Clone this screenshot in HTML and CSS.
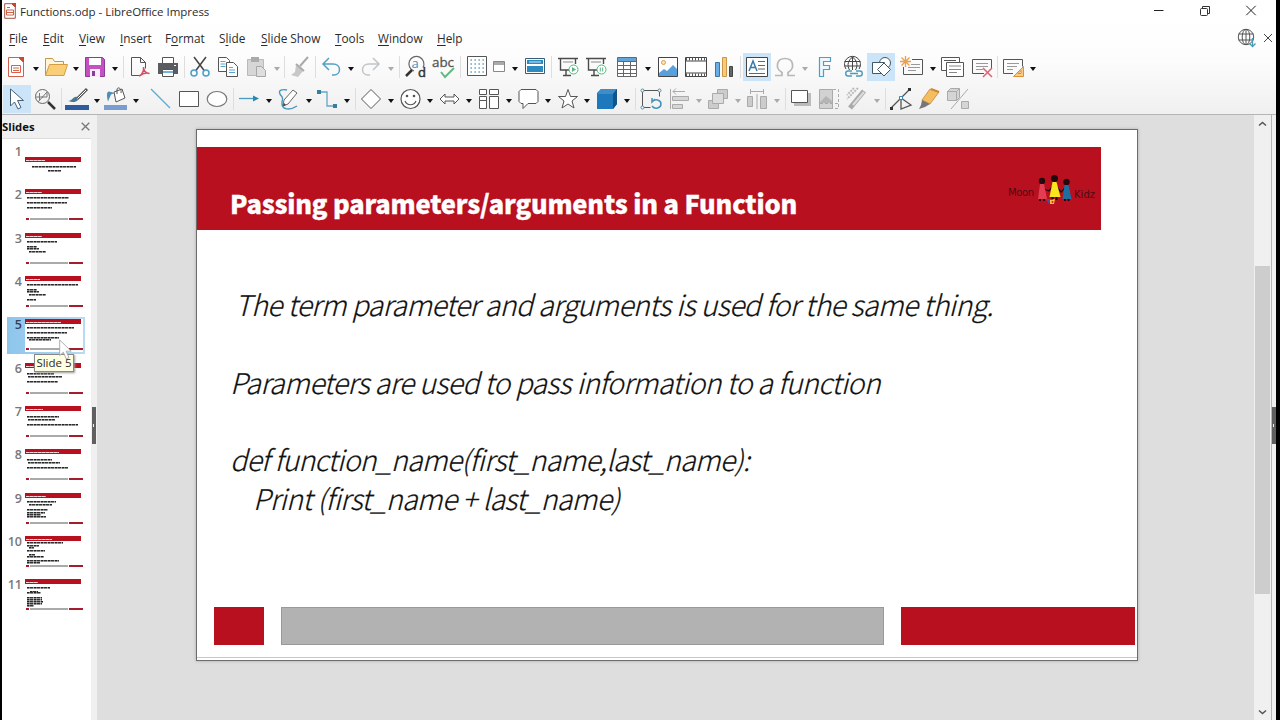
FILE: index.html
```html
<!DOCTYPE html>
<html lang="en">
<head>
  <meta charset="UTF-8">
  <meta name="viewport" content="width=device-width, initial-scale=1.0">
  <title>Functions.odp - LibreOffice Impress</title>
  <link rel="stylesheet" href="styles.css">
</head>
<body>
  <div class="window">
    <header class="titlebar">
      <svg class="app-icon" width="12" height="16" viewBox="0 0 12 16"><path d="M.7.7h7l3.6 3.6v11H.7z" fill="#fff" stroke="#a3563f"/><path d="M7 0h5v5z" fill="#c8452f"/><path d="M2.5 7h7v5h-7zM3 9.5h6M3 4.5h3" fill="none" stroke="#cc6048"/></svg>
      <span class="title">Functions.odp - LibreOffice Impress</span>
      <div class="controls">
        <svg width="12" height="12"><path d="M1 5.5h9.5" stroke="#222"/></svg>
        <svg width="12" height="12" fill="none" stroke="#333"><rect x="1.5" y="3.5" width="7" height="7" rx="1"/><path d="M3.5 3.5v-2h7v7h-2"/></svg>
        <svg width="12" height="12"><path d="M1.3.8l9.4 9.4M10.7.8l-9.4 9.4" stroke="#222"/></svg>
      </div>
    </header>

    <nav class="menubar">
      <span><u>F</u>ile</span>
      <span><u>E</u>dit</span>
      <span><u>V</u>iew</span>
      <span><u>I</u>nsert</span>
      <span>F<u>o</u>rmat</span>
      <span>S<u>l</u>ide</span>
      <span><u>S</u>lide Show</span>
      <span><u>T</u>ools</span>
      <span><u>W</u>indow</span>
      <span><u>H</u>elp</span>
      <div class="doc-controls">
        <svg width="20" height="20" viewBox="0 0 20 20" fill="none" stroke="#555"><circle cx="9" cy="9" r="7.7"/><ellipse cx="9" cy="9" rx="3.8" ry="7.7"/><path d="M9 1v16M1.5 6h15M1.5 12h15"/><path d="M15.500 10v8M12.500 15.500l3 3 3-3" stroke="#4b9cb8" stroke-width="1.300"/></svg>
        <svg width="10" height="10"><path d="M1 1l8 8M9 1L1 9" stroke="#444"/></svg>
      </div>
    </nav>

    <div class="toolbar standard">
      <!-- file -->
      <svg class="tool" viewBox="0 0 28 28" fill="none"><path d="M6.500 4.500h10l5 5v14h-15z" stroke="#d0604d" fill="#fff"/><path d="M16 4h6v6z" fill="#cf4630"/><path d="M9.500 12.500h9v7h-9zM11 15h6M11 17.500h6" stroke="#d9604b"/></svg>
      <i class="caret"></i>
      <svg class="tool" viewBox="0 0 28 28"><path d="M3.500 22.500v-17h7l2 3h9v4" fill="#fff5db" stroke="#c59447"/><path d="M3.500 22.500l4-11h18l-3.500 11z" fill="#f9ce76" stroke="#d49d43"/></svg>
      <i class="caret"></i>
      <svg class="tool" viewBox="0 0 28 28"><path d="M3.500 4.500h17l2 2v17h-19z" fill="#c451c1" stroke="#8c3b99"/><path d="M7 5h12v7H7z" fill="#fff"/><path d="M8 16h10v8H8z" fill="#f8edf8"/><path d="M10 18h3v5h-3z" fill="#8c3b99"/></svg>
      <i class="caret"></i>
      <i class="sep"></i>
      <svg class="tool" viewBox="0 0 28 28" fill="none"><path d="M15 22.500H5.500v-18h9l5 5v6M14.500 4.500v5h5" stroke="#555"/><path d="M13 23c3-1 5-5 4.500-9 0 4 2 6 6 6.500-3-1-7 0-10 2.500" stroke="#cf5364" stroke-width="1.500"/></svg>
      <svg class="tool" viewBox="0 0 28 28"><path d="M8.500 10V4.500h11V10" fill="#fff" stroke="#555"/><path d="M4 10h20v11H4z" fill="#595d62"/><path d="M8.500 16.500h11v7h-11z" fill="#fff" stroke="#555"/><path d="M9 18h10v2H9z" fill="#74b4d8"/><path d="M20 12h2v1h-2z" fill="#fff"/></svg>
      <i class="sep"></i>
      <svg class="tool" viewBox="0 0 28 28" fill="none"><path d="M8 4l10.500 14M20 4L9.500 18" stroke="#444" stroke-width="1.500"/><circle cx="8" cy="20" r="3" stroke="#4c9fc6" stroke-width="1.500"/><circle cx="20" cy="20" r="3" stroke="#4c9fc6" stroke-width="1.500"/></svg>
      <svg class="tool" viewBox="0 0 28 28" fill="#fff" stroke="#555"><path d="M4.500 4.500h8l3 3v11h-11z"/><path d="M6.500 8.500h5M6.500 11h5M6.500 13.500h5" stroke="#58a5d0"/><path d="M12.500 9.500h7l4 4v10h-11z"/><path d="M15 14.500h4M15 17h6M15 19.500h6" stroke="#58a5d0"/></svg>
      <svg class="tool" viewBox="0 0 28 28"><path d="M5.500 6.500h16v16h-16z" fill="#d6d6d6" stroke="#bababa"/><path d="M9 4h8v5H9z" fill="#aaa"/><path d="M14.500 13.500h5l4 4v6h-9z" fill="#dedede" stroke="#a7a7a7"/></svg>
      <i class="caret off"></i>
      <i class="sep"></i>
      <svg class="tool" viewBox="0 0 28 28"><path d="M22 4l-8 9" stroke="#aaa" stroke-width="2"/><path d="M10 12l7 6-5 6-7-2 4-3z" fill="#c8c8c8"/><path d="M10 11l8 7" stroke="#aaa" stroke-width="2"/></svg>
      <i class="sep"></i>
      <svg class="tool" viewBox="0 0 28 28" fill="none" stroke="#55a0c4" stroke-width="1.500"><path d="M12 5L6 11l6 6M6 11h10c9 0 8 11 1 11h-2"/></svg>
      <i class="caret"></i>
      <svg class="tool" viewBox="0 0 28 28" fill="none" stroke="#c1c5c7" stroke-width="1.500"><path d="M16 5l6 6-6 6M22 11H12c-9 0-8 11-1 11h2"/></svg>
      <i class="caret off"></i>
      <i class="sep"></i>
      <svg class="tool" viewBox="0 0 28 28" fill="none"><path d="M21 14.500A7.500 7.500 0 1 0 12 18" stroke="#666" stroke-width="1.200"/><path d="M10 17l-6 6" stroke="#333" stroke-width="2.500"/><text x="9.500" y="15" font-size="13" fill="#3b92bd">a</text><text x="16" y="23.500" font-size="13" fill="#333" stroke="#333" stroke-width=".5">d</text></svg>
      <svg class="tool" viewBox="0 0 28 28"><text x="2" y="14" font-size="13.500" textLength="22" lengthAdjust="spacingAndGlyphs" fill="#555" stroke="#555" stroke-width=".3">abc</text><path d="M11 19l4 5 9-9" fill="none" stroke="#5fb982" stroke-width="2"/></svg>
      <i class="sep"></i>
      <svg class="tool" viewBox="0 0 28 28"><path d="M4.500 3.500h19v19h-19z" fill="#fff" stroke="#555"/><path d="M7.500 7h14M7.500 11h14M7.500 15h14M7.500 19h14" stroke="#4b92b8" stroke-width="1.300" stroke-dasharray="1.300 2.700"/></svg>
      <svg class="tool small" viewBox="0 0 28 28"><path d="M8.500 8.500h11v10h-11z" fill="#fff" stroke="#888"/><path d="M9 9h10v3H9z" fill="#aaa"/></svg>
      <i class="caret"></i>
      <svg class="tool" viewBox="0 0 28 28"><path d="M4.500 5.500h19v15h-19z" fill="#fff" stroke="#355e7b"/><path d="M6 7h16v4H6zM6 13h16v6H6z" fill="#2b8bc0"/><path d="M8 9h12" stroke="#cde6f5"/></svg>
      <i class="sep"></i>
      <svg class="tool" viewBox="0 0 28 28" fill="none" stroke="#4b4b4b"><path d="M4 5.500h20M6.500 6v11h9M21.500 6v5M12 17v5M9 22.500h8" stroke-width="1.400"/><path d="M9 9h10" stroke="#888"/><circle cx="19.500" cy="16.500" r="4.500" fill="#fff" stroke="#57b67f"/><path d="M18 14l4 2.500-4 2.500z" fill="#57b67f" stroke="none"/></svg>
      <svg class="tool" viewBox="0 0 28 28" fill="none" stroke="#4b4b4b"><path d="M4 5.500h20M6.500 6v11h9M21.500 6v5M12 17v5M9 22.500h8" stroke-width="1.400"/><path d="M9 9h10" stroke="#888"/><circle cx="19.500" cy="16.500" r="4.500" fill="#fff" stroke="#57b67f"/><path d="M18.300 14.500v4M20.700 14.500v4" stroke="#57b67f"/></svg>
      <i class="gap"></i>
      <svg class="tool" viewBox="0 0 28 28"><path d="M4.500 4.500h19v19h-19z" fill="#fff"/><path d="M5 4h18v4H5z" fill="#62a5db"/><path d="M4.500 4.500h19v19h-19zM4.500 8.500h19M4.500 12.500h19M4.500 16.500h19M4.500 20.500h19M10.500 8v15M17.500 8v15" fill="none" stroke="#666"/></svg>
      <i class="caret"></i>
      <svg class="tool" viewBox="0 0 28 28"><path d="M4.500 4.500h19v19h-19z" fill="#fff" stroke="#444"/><path d="M5 20l5-4 3 2 6-6 4 4v7H5z" fill="#58a0dc"/><circle cx="9.500" cy="9.500" r="2" fill="#ffe3b2" stroke="#dc9e45"/></svg>
      <svg class="tool" viewBox="0 0 28 28"><path d="M3.500 4.500h21v19h-21z" fill="#fff" stroke="#444"/><path d="M3.500 8h21M3.500 20h21" stroke="#444" fill="none"/><path d="M4 6h20M4 22h20" stroke="#555" stroke-width="3" stroke-dasharray="1 2"/></svg>
      <svg class="tool" viewBox="0 0 28 28"><path d="M5.500 9.500h4v14h-4z" fill="#69aee6" stroke="#3877a9"/><path d="M12.500 4.500h4v19h-4z" fill="#f8cc74" stroke="#c89749"/><path d="M19.500 13.500h3v10h-3z" fill="#666" stroke="#444"/></svg>
      <i class="sep"></i>
      <svg class="tool active" viewBox="0 0 28 28"><path d="M3.500 4.500h21v19h-21z" fill="#fff" stroke="#444"/><path d="M6 18l4-10 4 10M7.500 14.500h5" fill="none" stroke="#3579ad" stroke-width="1.500"/><path d="M15 8.500h7M15 12.500h7M15 16h7M6 20.500h16" stroke="#666"/></svg>
      <svg class="tool" viewBox="0 0 28 28"><path d="M4 22.500h7v-3c-7-4-6-14 3-14s10 10 3 14v3h7" fill="none" stroke="#b8b8b8" stroke-width="1.700"/></svg>
      <i class="caret off"></i>
      <svg class="tool" viewBox="0 0 28 28"><path d="M9.500 23.500v-19h11v4h-7v4h6v4h-6v7z" fill="#eef8fd" stroke="#4b9fce" stroke-width="1.200"/></svg>
      <i class="gap"></i>
      <svg class="tool" viewBox="0 0 28 28" fill="none" stroke="#444"><path d="M7 16a8 8 0 1 1 13 0M13.500 4v13M5.500 8.500h16M5.500 13h16M10.500 17c-3-5-1-10 3-13 4 3 6 8 3 13"/><path d="M13 18H9c-3 0-3 5 0 5h4M17 18h4c3 0 3 5 0 5h-4M11 20.500h8" stroke="#4c9abd" stroke-width="1.400"/></svg>
      <svg class="tool active" viewBox="0 0 28 28" fill="#fff" stroke="#445766"><circle cx="18" cy="10" r="5.500"/><path d="M5.500 9.500h12v11h-12z"/><path d="M17 10l6.500 6.500L17 23l-6.500-6.500z"/></svg>
      <i class="gap"></i>
      <svg class="tool" viewBox="0 0 28 28" fill="none"><path d="M14 6.500h10.500v15h-19V14" stroke="#555"/><path d="M13 11.500h9M10 14.500h12M10 17.500h8" stroke="#999"/><path d="M7.500 3v11M2 8.500h11M3.500 4.500l8 8M11.500 4.500l-8 8" stroke="#e9a04d" stroke-width="1.300"/></svg>
      <i class="caret"></i>
      <svg class="tool" viewBox="0 0 28 28" fill="#fff" stroke="#555"><path d="M2.500 4.500h18v13h-18z"/><path d="M5 7.500h12"/><path d="M7.500 9.500h17v14h-17z"/><path d="M10 13h12M10 16.500h12M10 19.500h8" stroke="#888"/></svg>
      <i class="gap"></i>
      <svg class="tool" viewBox="0 0 28 28" fill="none" stroke="#555"><path d="M16 20.500H4.500v-14h19v9"/><path d="M8 10.500h12M8 13.500h12M8 16.500h7" stroke="#999"/><path d="M15 15l9 9M24 15l-9 9" stroke="#db6473" stroke-width="1.500"/></svg>
      <i class="sep"></i>
      <svg class="tool" viewBox="0 0 28 28" fill="none" stroke="#555"><path d="M14 20.500H4.500v-14h19v7"/><path d="M8 10.500h12M8 13.500h10M8 16.500h6" stroke="#999"/><path d="M14.500 23.500h10v-10z" fill="#f8cc83" stroke="#dc8e38"/><path d="M19 20.500h3v-3z" fill="#fff" stroke="#dc8e38"/></svg>
      <i class="caret"></i>
    </div>

    <div class="toolbar drawing">
      <svg class="tool active" viewBox="0 0 28 28"><path d="M7.500 4v17l4-4 3.500 7 3-1.500-3.500-7h6z" fill="#fff" stroke="#456077"/></svg>
      <svg class="tool" viewBox="0 0 28 28" fill="none"><circle cx="11.500" cy="11.500" r="7" stroke="#666"/><path d="M5 12h7M8.500 8v7M7 17l9-10M16 7v5h-5" stroke="#777"/><path d="M17 17l7 7" stroke="#333" stroke-width="2.500"/></svg>
      <i class="sep"></i>
      <svg class="tool" viewBox="0 0 28 28"><path d="M24 4L14 14" stroke="#555" stroke-width="3"/><path d="M23 5l-9 9" stroke="#fff"/><path d="M5 16c5 0 5-5 9-4l1 3c-3 3-6 2-10 1z" fill="#49778e"/><path d="M2 20h24v5H2z" fill="#2e5b9d"/></svg>
      <i class="caret"></i>
      <svg class="tool" viewBox="0 0 28 28"><path d="M12 7l8-3 3 9-9 4z" fill="#fff" stroke="#555"/><path d="M15 9V5c0-4 5-2 4 3" fill="none" stroke="#555"/><path d="M13 8L7 6.500c-3 0-2 6-1 10l3-7z" fill="#4f8eb4"/><path d="M2 20h23v5H2z" fill="#789dce"/></svg>
      <i class="caret"></i>
      <i class="gap"></i>
      <svg class="tool" viewBox="0 0 28 28"><path d="M4 4l19 19" stroke="#62a8ca" stroke-width="1.200"/></svg>
      <svg class="tool" viewBox="0 0 28 28"><path d="M4.500 6.500h19v15h-19z" fill="#fff" stroke="#555"/></svg>
      <svg class="tool" viewBox="0 0 28 28"><ellipse cx="14" cy="14" rx="9.800" ry="7.500" fill="#fff" stroke="#777" stroke-width="1.200"/></svg>
      <i class="sep"></i>
      <svg class="tool" viewBox="0 0 28 28"><path d="M4 13.500h15" stroke="#489cc0" stroke-width="1.300"/><path d="M18 10.500l6 3-6 3z" fill="#2789b3"/></svg>
      <i class="caret"></i>
      <svg class="tool" viewBox="0 0 28 28" fill="none"><path d="M12 5c-5-1-9 0-7 4 1 3 4 2 2 8-1 9 9 8 15 4" stroke="#4c96ba" stroke-width="1.400"/><path d="M18 5l4 3-9 11-5 2 1-6z" fill="#fff" stroke="#666"/><path d="M8 21l1-3 2 2z" fill="#444"/></svg>
      <i class="caret"></i>
      <svg class="tool" viewBox="0 0 28 28"><path d="M5 7h8v14h7" fill="none" stroke="#64a7c5" stroke-width="1.300"/><path d="M3 5h4v4H3zM19 19h4v4h-4z" fill="#347f9d"/></svg>
      <i class="caret"></i>
      <i class="sep"></i>
      <svg class="tool" viewBox="0 0 28 28"><path d="M14 4.500l9.500 9.500-9.500 9.500L4.500 14z" fill="#fff" stroke="#555"/></svg>
      <i class="caret"></i>
      <svg class="tool" viewBox="0 0 28 28"><circle cx="13.500" cy="14" r="9.500" fill="#fff" stroke="#555" stroke-width="1.200"/><path d="M8 16c2 5 9 5 11 0" fill="none" stroke="#555" stroke-width="1.200"/><circle cx="10" cy="11" r="1.300" fill="#555"/><circle cx="17" cy="11" r="1.300" fill="#555"/></svg>
      <i class="caret"></i>
      <svg class="tool" viewBox="0 0 28 28"><path d="M4 14l5-5v3h9V9l5 5-5 5v-3H9v3z" fill="#fff" stroke="#555"/></svg>
      <i class="caret"></i>
      <svg class="tool" viewBox="0 0 28 28" fill="#fff" stroke="#555"><path d="M4.500 4.500h7v5h-7zM14.500 4.500h9v5h-9zM4.500 11.500h7v4h-7zM4.500 15.500h7v8h-7zM14.500 11.500h9v12h-9z"/></svg>
      <i class="caret"></i>
      <svg class="tool" viewBox="0 0 28 28"><path d="M6 4.500h15l2 2v10l-2 2h-8l-5 5v-5H6l-2-2v-10z" fill="#fff" stroke="#555"/></svg>
      <i class="caret"></i>
      <svg class="tool" viewBox="0 0 28 28"><path d="M14 4.500l2.500 7h7l-5.500 4.500 2 7-6-4-6 4 2-7-5.500-4.500h7z" fill="#fff" stroke="#555"/></svg>
      <i class="caret"></i>
      <svg class="tool" viewBox="0 0 28 28"><path d="M8 4h16v15l-4 5H4V8z" fill="#176cad"/><path d="M8 4h16l-4 5H4z" fill="#3f8dc6"/><path d="M4 9h16v15H4z" fill="#1e79bc"/><path d="M20 9l4-5v15l-4 5z" fill="#115487"/></svg>
      <i class="caret"></i>
      <i class="sep"></i>
      <svg class="tool" viewBox="0 0 28 28" fill="none" stroke="#555"><path d="M5.500 5.500h18M5.500 5.500v17M22.500 5.500v6M5.500 22.500h8"/><path d="M18 14l-3 3v-4M15 17c3-4 9-2 9 2s-6 6-9 2" stroke="#4392b7" stroke-width="1.500"/><g fill="#fff" stroke="#4f8aa4"><circle cx="5.500" cy="5.500" r="1.500"/><circle cx="22.500" cy="5.500" r="1.500"/><circle cx="5.500" cy="22.500" r="1.500"/></g></svg>
      <i class="gap"></i>
      <svg class="tool" viewBox="0 0 28 28" fill="#d6d6d6" stroke="#aaa"><path d="M4.500 4v20M7 6.500h12M7 6.500l3-3M7 6.500l3 3M6.500 11.500h16v4h-16zM6.500 19.500h10v4h-10z"/></svg>
      <i class="caret off"></i>
      <svg class="tool" viewBox="0 0 28 28" fill="#ccc" stroke="#aaa"><path d="M13.500 4.500h10v9h-10zM4.500 15.500h10v8h-10z"/><path d="M8.500 8.500h11v10h-11z" fill="#ddd"/></svg>
      <i class="caret off"></i>
      <svg class="tool" viewBox="0 0 28 28" fill="#ccc" stroke="#aaa"><path d="M7.500 4v5M20.500 4v5M8 6.500h12M4.500 11.500h5v10h-5zM17.500 11.500h6v12h-6zM14 9v15"/></svg>
      <i class="caret off"></i>
      <i class="sep"></i>
      <svg class="tool" viewBox="0 0 28 28"><path d="M7 8h17v13H7z" fill="#bbb"/><path d="M4.500 5.500h16v12h-16z" fill="#fff" stroke="#555"/></svg>
      <svg class="tool" viewBox="0 0 28 28"><path d="M4.500 4.500h13v19h-13z" fill="#d2d2d2" stroke="#aaa"/><path d="M18 4.500h5.500v19H9M5 18.500h19" fill="none" stroke="#aaa" stroke-dasharray="3 2"/><path d="M5 17l6-6 6 5v2H5z" fill="#b5b5b5"/></svg>
      <svg class="tool" viewBox="0 0 28 28"><path d="M21 6L7 23" stroke="#aaa" stroke-width="5"/><path d="M21 7L10 20" stroke="#ddd" stroke-width="2"/><path d="M11 3L4 10M15 3L4 14" stroke="#bbb" stroke-width="2" stroke-dasharray="2 1"/></svg>
      <i class="caret off"></i>
      <i class="sep"></i>
      <svg class="tool" viewBox="0 0 28 28" fill="none" stroke="#555"><path d="M4 23L23 4M14 13v11l10-4z" stroke-width="1.300"/><path d="M3 22h3v3H3zM21 3h3v3h-3z" fill="#333" stroke="none"/><path d="M12.500 11.500h3v3h-3z" fill="#fff" stroke="#3787b0"/></svg>
      <svg class="tool" viewBox="0 0 28 28"><path d="M15 4l9 3-9 12-8-4z" fill="#f4bd62" stroke="#d8963f"/><path d="M16 4l8 3" stroke="#c98831" stroke-width="2"/><path d="M7 15l8 4-5 3-6 2 2-4z" fill="#777"/></svg>
      <i class="gap"></i>
      <svg class="tool" viewBox="0 0 28 28" fill="#d5d5d5" stroke="#aaa"><path d="M3.500 6.500l3-3h9v9l-3 3h-9zM3.500 6.500h9v9M12.500 6.500l3-3M24 4L7 24M17.500 16.500h7v7h-7z"/></svg>
    </div>

    <main class="workspace">
      <aside class="panel">
        <div class="panel-head"><span>Slides</span><svg width="9" height="9"><path d="M.7.7l7.600 7.600M8.300.7L.7 8.300" stroke="#777" stroke-width="1.300"/></svg></div>
        <ol class="slides" id="slides"></ol>
      </aside>
      <div class="splitter"><i class="grip"></i></div>

      <section class="canvas">
        <article class="slide">
          <div class="slide-head">
            <h1>Passing parameters/arguments in a Function</h1>
            <svg class="logo" width="92" height="36" viewBox="0 0 92 36">
              <g class="logo-text"><text x="1" y="25" textLength="26">Moon</text><text x="67" y="27" textLength="21">Kidz</text></g>
              <g fill="#21090d"><circle cx="35" cy="10" r="3.200"/><circle cx="47.500" cy="7.500" r="3.500"/><circle cx="59.500" cy="11" r="3.200"/></g>
              <path d="M37 18l5 2 4-5M49 15l5 6 4-4" fill="none" stroke="#21090d" stroke-width="1.300"/>
              <path d="M33 13h4l3 15h-9z" fill="#e23d52"/>
              <path d="M45.500 11h4l4 15h-11z" fill="#f8e71e"/>
              <path d="M57.500 14h4l3 14h-9z" fill="#1c6f9e"/>
              <path d="M33 28v2M37 28v2M45.500 26v3M49.500 26v3M58 28v2M61.500 28v2" stroke="#21090d" stroke-width="2"/>
              <path d="M39 28l3 5 2-5z" fill="#5845a8"/><path d="M43 29l5-1-1 5h-4z" fill="#ffbc38"/><circle cx="45.500" cy="31" r="1" fill="#c22"/>
            </svg>
          </div>
          <div class="slide-body">
            <p class="line-1">The term parameter and arguments is used for the same thing.</p>
            <p class="line-2">Parameters are used to pass information to a function</p>
            <p class="line-3">def function_name(first_name,last_name):</p>
            <p class="line-4">Print (first_name + last_name)</p>
          </div>
          <div class="slide-foot"><i class="red"></i><i class="gray"></i><i class="red"></i></div>
        </article>
      </section>

      <div class="scrollbar">
        <svg width="9" height="6"><path d="M1 4.500l3.500-3 3.500 3" fill="none" stroke="#555" stroke-width="1.500"/></svg>
        <div class="track"><div class="thumb"></div></div>
        <svg width="9" height="6"><path d="M1 1.500l3.500 3 3.500-3" fill="none" stroke="#555" stroke-width="1.500"/></svg>
      </div>
      <div class="sidebar-edge"><i class="grip"></i></div>
    </main>
  </div>

  <div class="tooltip">Slide 5</div>
  <svg class="pointer" width="14" height="21" viewBox="0 0 14 21"><path d="M.7 1v15.500l3.700-3.300 2.800 6.600 2.800-1.200-2.800-6.400h5z" fill="#fff" stroke="#999" stroke-width=".8"/></svg>

  <script>
    // each line is [top, left, width] inside the thumbnail
    const slides = [
      { title: 19, lines: [[25, 7, 44], [29, 23, 13]] },
      { title: 16, lines: [[8, 2, 42], [13, 2, 40], [18, 2, 25]] },
      { title: 16, lines: [[8, 2, 30], [13, 2, 10], [15, 2, 12], [18, 4, 17]] },
      { title: 14, lines: [[8, 2, 51], [13, 2, 10], [15, 2, 12], [18, 4, 17], [23, 2, 9]] },
      { title: 35, lines: [[8, 2, 47], [13, 2, 40], [18, 2, 32], [20, 4, 22]] },
      { title: 30, lines: [[10, 2, 27], [13, 3, 34], [18, 2, 31]] },
      { title: 17, lines: [[10, 2, 32], [13, 3, 27], [18, 2, 51]] },
      { title: 33, lines: [[10, 2, 25], [13, 3, 32], [18, 2, 41]] },
      { title: 20, lines: [[8, 2, 29], [11, 4, 23], [16, 2, 21], [19, 2, 18], [21, 2, 14], [23, 2, 19]] },
      { title: 26, lines: [[6, 2, 36], [9, 2, 12], [11, 4, 5], [14, 2, 18], [18, 4, 6], [20, 2, 17], [24, 2, 32], [26, 2, 13]] },
      { title: 12, lines: [[8, 2, 23], [12, 5, 8], [13, 2, 14], [18, 2, 15], [20, 2, 15], [22, 2, 16], [24, 2, 15], [26, 2, 7]] }
    ];

    document.getElementById('slides').innerHTML = slides.map((slide, i) => {
      const lines = slide.lines.map(l =>
        `<i class="text" style="top:${l[0]}px;left:${l[1]}px;width:${l[2]}px"></i>`).join('');
      const cls = i === 0 ? 'cover' : i === 4 ? 'selected' : '';
      return `<li class="${cls}"><b>${i + 1}</b><div class="preview">
        <div class="bar"><i style="width:${slide.title}px"></i></div>${lines}
        <div class="foot"><i></i><i></i><i></i></div></div></li>`;
    }).join('');
  </script>
</body>
</html>
```
FILE: styles.css
```css
* {
  box-sizing: border-box;
}

body {
  margin: 0;
  height: 720px;
  overflow: hidden;
  background-color: #000;
  font-family: "Open Sans", "Noto Sans", sans-serif;
  font-size: 12px;
  color: #2b2b2b;
}

.window {
  display: flex;
  flex-direction: column;
  width: 1274px;
  height: 720px;
  margin-left: 2px;
  background: linear-gradient(#fff 0, #fdfdfd 55px, #f0f0f0 114px);
}

.titlebar {
  display: flex;
  align-items: center;
  height: 22px;
  padding: 0 19px 0 2px;
}

.title {
  margin: 1px 0 0 4px;
  font-size: 11.5px;
  letter-spacing: -0.03px;
}

.controls {
  display: flex;
  gap: 34px;
  margin-left: auto;
}

.menubar {
  display: grid;
  grid-template-columns: 34px 36px 41px 45px 54px 42px 74px 43px 59px 1fr auto;
  align-items: center;
  height: 31px;
  padding-left: 7px;
  font-size: 11.8px;
  white-space: nowrap;
}

.menubar u {
  text-underline-offset: 2px;
}

.doc-controls {
  display: flex;
  align-items: center;
  gap: 6px;
  margin-right: 3px;
}

/* toolbars */
.toolbar {
  display: grid;
  align-items: center;
  justify-items: center;
  height: 28px;
}

.standard {
  grid-template-columns:
    28px 12px 28px 12px 27px 12px 5px 28px 28px 4px 28px 28px 28px 13px 3px 28px 3px
    28px 12px 28px 12px 5px 28px 28px 5px 28px 17px 13px 28px 5px 28px 28px 3px
    28px 13px 28px 28px 28px 5px 28px 28px 11px 28px 1px 28px 28px 3px
    28px 13px 28px 1px 28px 3px 28px 12px;
}

.drawing {
  grid-template-columns:
    28px 28px 4px 28px 12px 26px 14px 4px 28px 28px 28px 4px 28px 11px 29px 11px
    27px 12px 4px 28px 12px 27px 12px 27px 12px 28px 12px 27px 12px 27px 12px 28px 12px
    4px 28px 1px 28px 10px 28px 11px 28px 12px 4px 28px 28px 28px 12px 4px 28px 28px 1px 28px;
  height: 34px;
  padding: 4px 0 1px 1px;
  border-bottom: 1px solid #b5b5b5;
}

.tool {
  width: 28px;
  height: 28px;
}

.tool.small {
  justify-self: start;
  margin-left: -6px;
}

.tool.active {
  background-color: #cce4f7;
}

.caret {
  border: 3.500px solid transparent;
  border-top: 4px solid #111;
  border-bottom: 0;
  margin-top: 3px;
}

.caret.off {
  border-top-color: #aaa;
}

.sep {
  width: 1px;
  height: 22px;
  background-color: #dedede;
}

/* workspace */
.workspace {
  display: flex;
  flex: 1;
  min-height: 0;
}

.panel {
  display: flex;
  flex-direction: column;
  width: 89px;
}

.panel-head {
  display: flex;
  align-items: center;
  justify-content: space-between;
  height: 24px;
  padding: 0 1px 0 0;
  background-color: #f0f0f0;
  border-bottom: 1px solid #ddd;
  font-size: 11.300px;
  font-weight: bold;
  color: #111;
}

.slides {
  flex: 1;
  margin: 0;
  padding: 5px 6px 0 5px;
  list-style: none;
  background-color: #fff;
}

.slides li {
  display: flex;
  align-items: flex-start;
  height: 37px;
  margin-bottom: 6.330px;
  padding: 2px;
}

.slides b {
  display: flex;
  justify-content: flex-end;
  width: 13px;
  margin: -3px 3px 0 0;
  font-size: 12.500px;
  font-weight: 600;
  line-height: 17px;
  color: #777;
}

.slides .selected {
  background: linear-gradient(90deg, #8cc5ec, #b9dbf2);
}

.selected b {
  color: #345;
}

.preview {
  position: relative;
  width: 58px;
  height: 33px;
  background-color: #fff;
}

.bar {
  width: 56px;
  height: 5px;
  padding: 3px 0 0 1px;
  background-color: #b91020;
}

.cover .bar {
  margin-top: 11px;
}

.bar i {
  display: block;
  height: 1px;
  background: repeating-linear-gradient(90deg, #f6d5d8 0 3px, #e59a9f 3px 4px);
}

.text {
  position: absolute;
  height: 2px;
  background:
    linear-gradient(rgba(255, 255, 255, 0) 50%, rgba(255, 255, 255, 0.45) 50%),
    repeating-linear-gradient(90deg, #222 0 2px, #777 2px 3px, #333 3px 6px, #999 6px 7px);
}

.cover .text {
  margin-top: -5px;
}

.foot {
  position: absolute;
  left: 1px;
  bottom: 2px;
  display: grid;
  grid-template-columns: 3px 38px 14px;
  gap: 1px;
}

.cover .foot {
  display: none;
}

.foot i {
  height: 2px;
  background-color: #a51c2b;
}

.foot i:nth-child(2) {
  background-color: #aaa;
}

.splitter {
  display: flex;
  align-items: center;
  width: 6px;
  background-color: #f0f0f0;
}

.grip {
  width: 4px;
  height: 37px;
  margin: 16px 0 0 1px;
  background: linear-gradient(90deg, transparent 1px, #eee 1px 2px, transparent 2px) center / 4px 3px no-repeat #606060;
}

.canvas {
  flex: 1;
  padding: 14px 0 0 99px;
  background-color: #dedede;
}

.slide {
  display: flex;
  flex-direction: column;
  width: 942px;
  height: 532px;
  padding-top: 17px;
  background: linear-gradient(#c8c8c8, #c8c8c8) 0 527px / 100% 1px no-repeat #fff;
  border: 1px solid #6c6c6c;
  box-shadow: 0 0 3px #aaa;
}

.slide-head {
  display: flex;
  justify-content: space-between;
  width: 904px;
  height: 83px;
  padding: 24px 2px 0 33px;
  background-color: #b91020;
}

h1 {
  margin: 13px 0 0;
  font-family: "Noto Sans CJK SC", sans-serif;
  font-size: 25.500px;
  font-weight: 900;
  line-height: 38px;
  letter-spacing: -0.19px;
  color: #fff;
  -webkit-text-stroke: 0.3px #fff;
  white-space: nowrap;
}

.logo-text {
  font-family: "DejaVu Sans", sans-serif;
  font-size: 10px;
  fill: #4a0d15;
}

.slide-body {
  flex: 1;
  padding: 55px 0 0 33px;
  font-family: "Noto Sans CJK SC", sans-serif;
  font-size: 28.500px;
  font-weight: 300;
  font-style: italic;
  line-height: 38.750px;
  letter-spacing: -0.66px;
  color: #111;
  -webkit-text-stroke: 0.2px #111;
  white-space: nowrap;
}

.slide-body p {
  margin: 0 0 38.750px;
}

.slide-body .line-1 {
  padding-left: 5px;
}

.slide-body .line-3 {
  margin-bottom: 0;
  letter-spacing: -0.74px;
}

.slide-body .line-4 {
  margin-bottom: 0;
  padding-left: 23px;
}

.slide-foot {
  display: grid;
  grid-template-columns: 50px 603px 234px;
  gap: 17px;
  height: 53px;
  padding-left: 17px;
}

.slide-foot i {
  height: 38px;
}

.red {
  background-color: #b91020;
}

.gray {
  background-color: #b2b2b2;
  border: 1px solid #999;
}

.scrollbar {
  display: flex;
  flex-direction: column;
  align-items: center;
  width: 17px;
  padding: 6px 0 5px;
  background-color: #f0f0f0;
}

.track {
  flex: 1;
  align-self: stretch;
  padding: 139px 1px 0;
}

.thumb {
  height: 328px;
  background-color: #cdcdcd;
}

.sidebar-edge {
  display: flex;
  align-items: center;
  width: 5px;
  background-color: #f0f0f0;
  border-left: 1px solid #b5b5b5;
}

.sidebar-edge .grip {
  margin-left: 0;
}

.tooltip {
  position: absolute;
  left: 34px;
  top: 354px;
  width: 40px;
  height: 18px;
  background-color: #ffffe1;
  border: 1px solid #888;
  box-shadow: 1px 1px 2px #999;
  font-size: 11.500px;
  line-height: 16px;
  text-align: center;
  white-space: nowrap;
}

.pointer {
  position: absolute;
  left: 59px;
  top: 339px;
}
```
